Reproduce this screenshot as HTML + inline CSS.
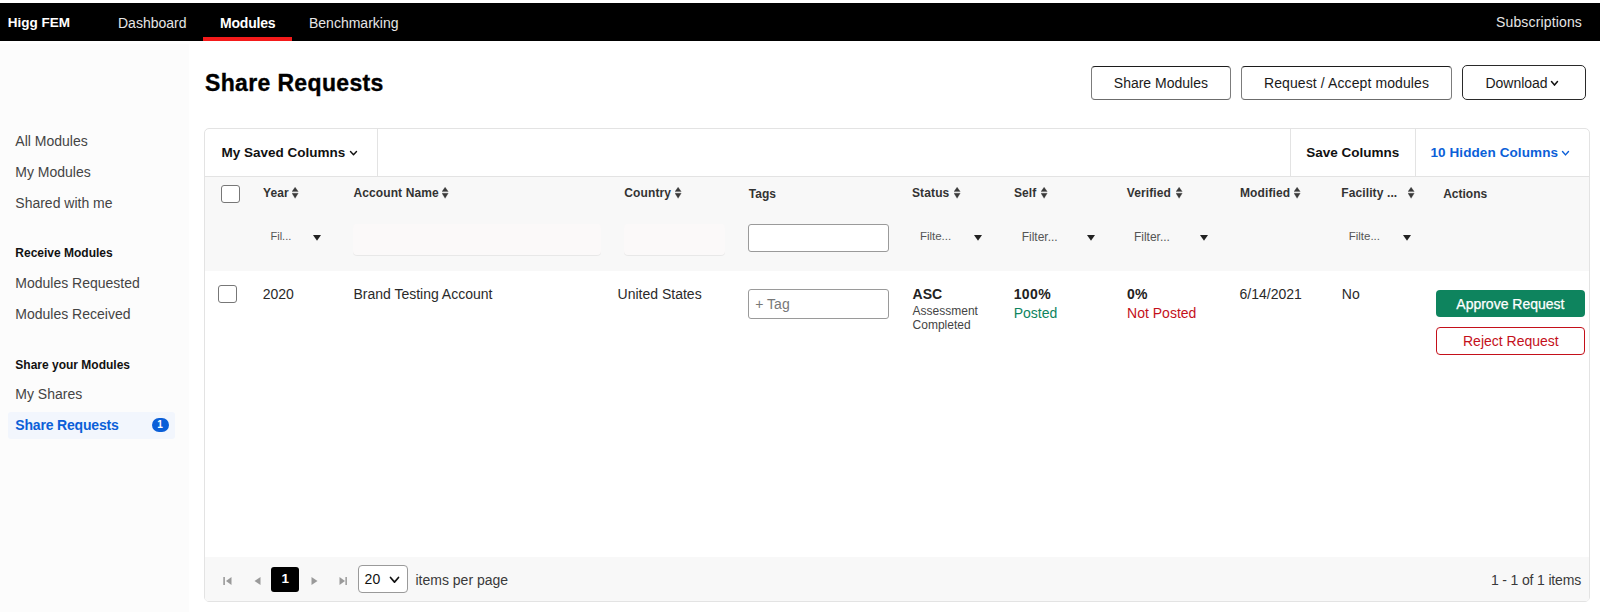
<!DOCTYPE html>
<html><head><meta charset="utf-8"><title>Share Requests</title>
<style>
html,body{margin:0;padding:0;}
body{width:1600px;height:612px;position:relative;overflow:hidden;background:#fff;font-family:"Liberation Sans",sans-serif;}
.t{position:absolute;white-space:nowrap;}
.b{position:absolute;}
</style></head><body>
<div class="b" style="left:0px;top:3px;width:1600px;height:38px;background:#000"></div>
<div class="t" style="left:7.8px;top:15.87px;font-size:13.5px;line-height:13.5px;font-weight:700;color:#fff;">Higg FEM</div>
<div class="t" style="left:118px;top:15.75px;font-size:14px;line-height:14px;font-weight:400;color:#e6e6e6;">Dashboard</div>
<div class="t" style="left:220px;top:15.75px;font-size:14px;line-height:14px;font-weight:700;color:#fff;letter-spacing:-0.2px">Modules</div>
<div class="t" style="left:309px;top:15.75px;font-size:14px;line-height:14px;font-weight:400;color:#e6e6e6;">Benchmarking</div>
<div class="t" style="left:1496px;top:15.05px;font-size:14px;line-height:14px;font-weight:400;color:#e6e6e6;letter-spacing:0.15px">Subscriptions</div>
<div class="b" style="left:203px;top:37px;width:89px;height:4px;background:#f41a1a"></div>
<div class="b" style="left:0px;top:44px;width:188.5px;height:568px;background:#fcfcfc"></div>
<div class="t" style="left:15.3px;top:134.05px;font-size:14px;line-height:14px;font-weight:400;color:#444;">All Modules</div>
<div class="t" style="left:15.3px;top:164.95px;font-size:14px;line-height:14px;font-weight:400;color:#444;">My Modules</div>
<div class="t" style="left:15.3px;top:195.75px;font-size:14px;line-height:14px;font-weight:400;color:#444;">Shared with me</div>
<div class="t" style="left:15.3px;top:276.15px;font-size:14px;line-height:14px;font-weight:400;color:#444;">Modules Requested</div>
<div class="t" style="left:15.3px;top:306.85px;font-size:14px;line-height:14px;font-weight:400;color:#444;">Modules Received</div>
<div class="t" style="left:15.3px;top:387.05px;font-size:14px;line-height:14px;font-weight:400;color:#444;">My Shares</div>
<div class="t" style="left:15.3px;top:247.34px;font-size:12px;line-height:12px;font-weight:700;color:#111;">Receive Modules</div>
<div class="t" style="left:15.3px;top:358.84px;font-size:12px;line-height:12px;font-weight:700;color:#111;">Share your Modules</div>
<div class="b" style="left:7.5px;top:412px;width:167.5px;height:26.5px;background:#f2f6fd;border-radius:3px"></div>
<div class="t" style="left:15.3px;top:417.90px;font-size:14px;line-height:14px;font-weight:700;color:#0b5fd8;letter-spacing:-0.18px">Share Requests</div>
<div class="b" style="left:152px;top:417.5px;width:17px;height:14.5px;background:#0b5fd8;border-radius:7px"></div>
<div class="t" style="left:157.3px;top:420.14px;font-size:10px;line-height:10px;font-weight:700;color:#fff;">1</div>
<div class="t" style="left:205px;top:71.53px;font-size:23px;line-height:23px;font-weight:700;color:#000;letter-spacing:0.35px;-webkit-text-stroke:0.35px #000">Share Requests</div>
<div class="b" style="left:1091px;top:66px;width:140px;height:33.5px;border:1px solid #7c7c7c;border-top-color:#1c1c1c;border-bottom-color:#6c6c6c;border-radius:4px;box-sizing:border-box;background:#fff"></div>
<div class="t" style="left:1113.8px;top:76.15px;font-size:14px;line-height:14px;font-weight:400;color:#1a1a1a;">Share Modules</div>
<div class="b" style="left:1241.4px;top:66px;width:210.5999999999999px;height:33.5px;border:1px solid #7c7c7c;border-top-color:#1c1c1c;border-bottom-color:#6c6c6c;border-radius:4px;box-sizing:border-box;background:#fff"></div>
<div class="t" style="left:1264px;top:76.15px;font-size:14px;line-height:14px;font-weight:400;color:#1a1a1a;letter-spacing:0.1px">Request / Accept modules</div>
<div class="b" style="left:1462px;top:65.2px;width:124px;height:34.7px;border:1.3px solid #2a2a2a;border-radius:5px;box-sizing:border-box;background:#fff"></div>
<div class="t" style="left:1485.4px;top:75.65px;font-size:14px;line-height:14px;font-weight:400;color:#1a1a1a;">Download</div>
<svg class="b" style="left:1550.2px;top:79.5px;overflow:visible" width="9" height="6.6" viewBox="-1 -1 9 6.6"><path d="M0.5 0.5 L3.5 4.1 L6.5 0.5" fill="none" stroke="#111" stroke-width="1.5" stroke-linecap="round" stroke-linejoin="round"/></svg>
<div class="b" style="left:204.2px;top:128px;width:1385.6px;height:473.79999999999995px;border:1px solid #e3e3e3;border-radius:5px;box-sizing:border-box;background:#fff"></div>
<div class="b" style="left:205.2px;top:176px;width:1383.6px;height:1px;background:#e3e3e3"></div>
<div class="b" style="left:377px;top:129px;width:1px;height:47px;background:#e3e3e3"></div>
<div class="b" style="left:1289.6px;top:129px;width:1.0px;height:47px;background:#e3e3e3"></div>
<div class="b" style="left:1415.3px;top:129px;width:1.0px;height:47px;background:#e3e3e3"></div>
<div class="t" style="left:221.5px;top:146.17px;font-size:13.5px;line-height:13.5px;font-weight:700;color:#111;">My Saved Columns</div>
<svg class="b" style="left:348.8px;top:149.6px;overflow:visible" width="9" height="6.3" viewBox="-1 -1 9 6.3"><path d="M0.5 0.5 L3.5 3.8 L6.5 0.5" fill="none" stroke="#111" stroke-width="1.4" stroke-linecap="round" stroke-linejoin="round"/></svg>
<div class="t" style="left:1306.3px;top:146.37px;font-size:13.5px;line-height:13.5px;font-weight:700;color:#111;">Save Columns</div>
<div class="t" style="left:1430.4px;top:146.07px;font-size:13.5px;line-height:13.5px;font-weight:700;color:#0b5fd8;letter-spacing:0.1px">10 Hidden Columns</div>
<svg class="b" style="left:1561px;top:149.6px;overflow:visible" width="9" height="6.4" viewBox="-1 -1 9 6.4"><path d="M0.5 0.5 L3.5 3.9000000000000004 L6.5 0.5" fill="none" stroke="#0b5fd8" stroke-width="1.4" stroke-linecap="round" stroke-linejoin="round"/></svg>
<div class="b" style="left:205.2px;top:177px;width:1383.6px;height:93.5px;background:#f8f8f8"></div>
<div class="b" style="left:221.3px;top:184.5px;width:18.799999999999983px;height:18.80000000000001px;border:1.5px solid #777;border-radius:3px;box-sizing:border-box;background:#fff"></div>
<div class="t" style="left:263px;top:186.74px;font-size:12px;line-height:12px;font-weight:700;color:#333;letter-spacing:0.12px">Year</div>
<svg class="b" style="left:291.8px;top:186.60000000000002px" width="7" height="12" viewBox="0 0 7 12"><path d="M3.1 0.2 L6.2 4.6 L0 4.6 Z M0 6.3 L6.2 6.3 L3.1 11.3 Z" fill="#3a3a3a" stroke="#3a3a3a" stroke-width="0.3" stroke-linejoin="round"/></svg>
<div class="t" style="left:353.4px;top:186.74px;font-size:12px;line-height:12px;font-weight:700;color:#333;letter-spacing:0.12px">Account Name</div>
<svg class="b" style="left:442px;top:186.60000000000002px" width="7" height="12" viewBox="0 0 7 12"><path d="M3.1 0.2 L6.2 4.6 L0 4.6 Z M0 6.3 L6.2 6.3 L3.1 11.3 Z" fill="#3a3a3a" stroke="#3a3a3a" stroke-width="0.3" stroke-linejoin="round"/></svg>
<div class="t" style="left:624.3px;top:186.74px;font-size:12px;line-height:12px;font-weight:700;color:#333;letter-spacing:0.12px">Country</div>
<svg class="b" style="left:674.5px;top:186.60000000000002px" width="7" height="12" viewBox="0 0 7 12"><path d="M3.1 0.2 L6.2 4.6 L0 4.6 Z M0 6.3 L6.2 6.3 L3.1 11.3 Z" fill="#3a3a3a" stroke="#3a3a3a" stroke-width="0.3" stroke-linejoin="round"/></svg>
<div class="t" style="left:912px;top:186.74px;font-size:12px;line-height:12px;font-weight:700;color:#333;letter-spacing:0.12px">Status</div>
<svg class="b" style="left:953.8px;top:186.60000000000002px" width="7" height="12" viewBox="0 0 7 12"><path d="M3.1 0.2 L6.2 4.6 L0 4.6 Z M0 6.3 L6.2 6.3 L3.1 11.3 Z" fill="#3a3a3a" stroke="#3a3a3a" stroke-width="0.3" stroke-linejoin="round"/></svg>
<div class="t" style="left:1013.9px;top:186.74px;font-size:12px;line-height:12px;font-weight:700;color:#333;letter-spacing:0.12px">Self</div>
<svg class="b" style="left:1040.5px;top:186.60000000000002px" width="7" height="12" viewBox="0 0 7 12"><path d="M3.1 0.2 L6.2 4.6 L0 4.6 Z M0 6.3 L6.2 6.3 L3.1 11.3 Z" fill="#3a3a3a" stroke="#3a3a3a" stroke-width="0.3" stroke-linejoin="round"/></svg>
<div class="t" style="left:1126.7px;top:186.74px;font-size:12px;line-height:12px;font-weight:700;color:#333;letter-spacing:0.12px">Verified</div>
<svg class="b" style="left:1175.9px;top:186.60000000000002px" width="7" height="12" viewBox="0 0 7 12"><path d="M3.1 0.2 L6.2 4.6 L0 4.6 Z M0 6.3 L6.2 6.3 L3.1 11.3 Z" fill="#3a3a3a" stroke="#3a3a3a" stroke-width="0.3" stroke-linejoin="round"/></svg>
<div class="t" style="left:1240px;top:186.74px;font-size:12px;line-height:12px;font-weight:700;color:#333;letter-spacing:0.12px">Modified</div>
<svg class="b" style="left:1294.3px;top:186.60000000000002px" width="7" height="12" viewBox="0 0 7 12"><path d="M3.1 0.2 L6.2 4.6 L0 4.6 Z M0 6.3 L6.2 6.3 L3.1 11.3 Z" fill="#3a3a3a" stroke="#3a3a3a" stroke-width="0.3" stroke-linejoin="round"/></svg>
<div class="t" style="left:1341.2px;top:186.74px;font-size:12px;line-height:12px;font-weight:700;color:#333;letter-spacing:0.12px">Facility ...</div>
<svg class="b" style="left:1407.6px;top:186.60000000000002px" width="7" height="12" viewBox="0 0 7 12"><path d="M3.1 0.2 L6.2 4.6 L0 4.6 Z M0 6.3 L6.2 6.3 L3.1 11.3 Z" fill="#3a3a3a" stroke="#3a3a3a" stroke-width="0.3" stroke-linejoin="round"/></svg>
<div class="t" style="left:748.8px;top:188.04px;font-size:12px;line-height:12px;font-weight:700;color:#333;">Tags</div>
<div class="t" style="left:1443.2px;top:188.04px;font-size:12px;line-height:12px;font-weight:700;color:#333;">Actions</div>
<div class="t" style="left:270.5px;top:231.39px;font-size:11px;line-height:11px;font-weight:400;color:#555;">Fil...</div>
<svg class="b" style="left:312.8px;top:235.2px" width="8" height="6" viewBox="0 0 8 6"><path d="M0 0 L8 0 L4 5.8 Z" fill="#222"/></svg>
<div class="b" style="left:352.6px;top:223.5px;width:248.69999999999993px;height:31.80000000000001px;background:#fbf9f9;border-radius:4px;box-shadow:0 1px 0 #e8e8e8"></div>
<div class="b" style="left:623.8px;top:223.8px;width:101.20000000000005px;height:31.69999999999999px;background:#fbf9f9;border-radius:4px;box-shadow:0 1px 0 #e8e8e8"></div>
<div class="b" style="left:748.3px;top:223.8px;width:140.5px;height:28.399999999999977px;background:#fff;border:1px solid #9a9a9a;border-radius:3px;box-sizing:border-box"></div>
<div class="t" style="left:919.9px;top:230.97px;font-size:11.5px;line-height:11.5px;font-weight:400;color:#555;">Filte...</div>
<svg class="b" style="left:973.9px;top:235.2px" width="8" height="6" viewBox="0 0 8 6"><path d="M0 0 L8 0 L4 5.8 Z" fill="#222"/></svg>
<div class="t" style="left:1021.7px;top:230.54px;font-size:12px;line-height:12px;font-weight:400;color:#555;">Filter...</div>
<svg class="b" style="left:1087px;top:235.2px" width="8" height="6" viewBox="0 0 8 6"><path d="M0 0 L8 0 L4 5.8 Z" fill="#222"/></svg>
<div class="t" style="left:1133.9px;top:230.54px;font-size:12px;line-height:12px;font-weight:400;color:#555;">Filter...</div>
<svg class="b" style="left:1199.8px;top:235.2px" width="8" height="6" viewBox="0 0 8 6"><path d="M0 0 L8 0 L4 5.8 Z" fill="#222"/></svg>
<div class="t" style="left:1348.7px;top:230.97px;font-size:11.5px;line-height:11.5px;font-weight:400;color:#555;">Filte...</div>
<svg class="b" style="left:1403px;top:235.2px" width="8" height="6" viewBox="0 0 8 6"><path d="M0 0 L8 0 L4 5.8 Z" fill="#222"/></svg>
<div class="b" style="left:218px;top:284.6px;width:18.80000000000001px;height:18.599999999999966px;border:1.5px solid #777;border-radius:3px;box-sizing:border-box;background:#fff"></div>
<div class="t" style="left:262.7px;top:287.25px;font-size:14px;line-height:14px;font-weight:400;color:#2a2a2a;">2020</div>
<div class="t" style="left:353.4px;top:287.25px;font-size:14px;line-height:14px;font-weight:400;color:#2a2a2a;">Brand Testing Account</div>
<div class="t" style="left:617.6px;top:287.25px;font-size:14px;line-height:14px;font-weight:400;color:#2a2a2a;">United States</div>
<div class="b" style="left:747.9px;top:288.5px;width:140.70000000000005px;height:30.30000000000001px;background:#fff;border:1px solid #9a9a9a;border-radius:3px;box-sizing:border-box"></div>
<div class="t" style="left:755.3px;top:297.15px;font-size:14px;line-height:14px;font-weight:400;color:#777;">+ Tag</div>
<div class="t" style="left:912.6px;top:287.45px;font-size:14px;line-height:14px;font-weight:700;color:#222;">ASC</div>
<div class="t" style="left:912.6px;top:305.14px;font-size:12px;line-height:12px;font-weight:400;color:#444;">Assessment</div>
<div class="t" style="left:912.6px;top:319.14px;font-size:12px;line-height:12px;font-weight:400;color:#444;">Completed</div>
<div class="t" style="left:1013.7px;top:287.45px;font-size:14px;line-height:14px;font-weight:700;color:#222;letter-spacing:0.4px">100%</div>
<div class="t" style="left:1013.7px;top:306.25px;font-size:14px;line-height:14px;font-weight:400;color:#0e845e;">Posted</div>
<div class="t" style="left:1127.1px;top:287.45px;font-size:14px;line-height:14px;font-weight:700;color:#222;">0%</div>
<div class="t" style="left:1127.1px;top:306.25px;font-size:14px;line-height:14px;font-weight:400;color:#c4101a;">Not Posted</div>
<div class="t" style="left:1239.5px;top:287.25px;font-size:14px;line-height:14px;font-weight:400;color:#2a2a2a;">6/14/2021</div>
<div class="t" style="left:1341.8px;top:287.25px;font-size:14px;line-height:14px;font-weight:400;color:#2a2a2a;">No</div>
<div class="b" style="left:1436.2px;top:290px;width:148.79999999999995px;height:27px;background:#0e845e;border-radius:4px"></div>
<div class="t" style="left:1456.3px;top:297.45px;font-size:14px;line-height:14px;font-weight:400;color:#fff;-webkit-text-stroke:0.25px #fff">Approve Request</div>
<div class="b" style="left:1436.2px;top:327px;width:148.79999999999995px;height:27.5px;border:1.2px solid #c4101a;border-radius:4px;box-sizing:border-box;background:#fff"></div>
<div class="t" style="left:1463px;top:334.45px;font-size:14px;line-height:14px;font-weight:400;color:#c4101a;">Reject Request</div>
<div class="b" style="left:205.2px;top:557.3px;width:1383.6px;height:43.5px;background:#f8f8f8;border-radius:0 0 3px 3px"></div>
<svg class="b" style="left:223px;top:577px" width="9" height="8" viewBox="0 0 9 8"><rect x="0.3" y="0" width="1.6" height="8" fill="#9a9a9a"/><path d="M8.5 0 L8.5 8 L3 4 Z" fill="#9a9a9a"/></svg>
<svg class="b" style="left:254px;top:577px" width="7" height="8" viewBox="0 0 7 8"><path d="M6.5 0 L6.5 8 L0.5 4 Z" fill="#9a9a9a"/></svg>
<div class="b" style="left:271.2px;top:566.9px;width:28.19999999999999px;height:24.700000000000045px;background:#000;border-radius:3px"></div>
<div class="t" style="left:281.5px;top:572.47px;font-size:13.5px;line-height:13.5px;font-weight:700;color:#fff;">1</div>
<svg class="b" style="left:310.5px;top:577px" width="7" height="8" viewBox="0 0 7 8"><path d="M0.5 0 L0.5 8 L6.5 4 Z" fill="#9a9a9a"/></svg>
<svg class="b" style="left:338.5px;top:577px" width="9" height="8" viewBox="0 0 9 8"><path d="M0.5 0 L0.5 8 L6 4 Z" fill="#9a9a9a"/><rect x="6.4" y="0" width="1.5" height="8" fill="#9a9a9a"/></svg>
<div class="b" style="left:357.9px;top:565.1px;width:49.900000000000034px;height:28.100000000000023px;background:#fff;border:1px solid #9a9a9a;border-radius:4px;box-sizing:border-box"></div>
<div class="t" style="left:364.6px;top:572.25px;font-size:14px;line-height:14px;font-weight:400;color:#111;">20</div>
<svg class="b" style="left:389.3px;top:576px;overflow:visible" width="11" height="7.6" viewBox="-1 -1 11 7.6"><path d="M0.5 0.5 L4.5 5.1 L8.5 0.5" fill="none" stroke="#111" stroke-width="1.7" stroke-linecap="round" stroke-linejoin="round"/></svg>
<div class="t" style="left:415.5px;top:572.95px;font-size:14px;line-height:14px;font-weight:400;color:#3a3a3a;">items per page</div>
<div class="t" style="left:1490.9px;top:572.75px;font-size:14px;line-height:14px;font-weight:400;color:#3a3a3a;letter-spacing:-0.15px">1 - 1 of 1 items</div>

</body></html>
